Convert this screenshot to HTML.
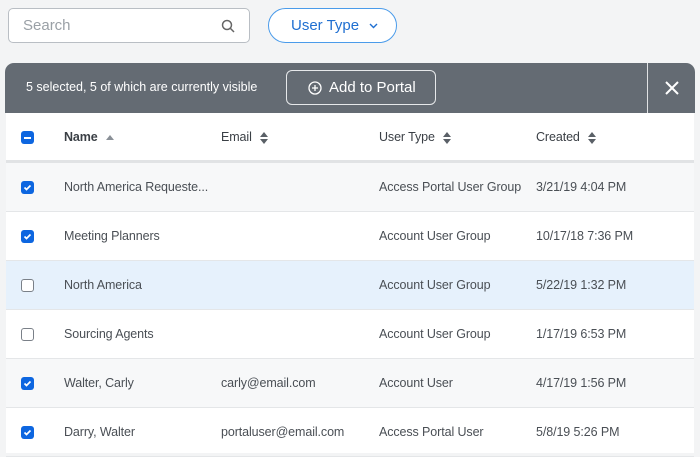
<!DOCTYPE html>
<html><head><style>
*{box-sizing:border-box;margin:0;padding:0}
body{width:700px;height:451px;overflow:hidden;background:#f3f4f5;font-family:"Liberation Sans",sans-serif;position:relative;color:#4a4f55}
.search{position:absolute;left:8px;top:8px;width:242px;height:35px;background:#fff;border:1px solid #b9bec4;border-radius:5px;font-size:15px;color:#9aa0a6;padding:8px 14px}
.ut{position:absolute;left:268px;top:8px;width:129px;height:35px;border:1px solid #4a9bea;border-radius:18px;background:#fff;color:#1f6fd1;font-size:15px;padding:8px 0 0 22px}
.bar{position:absolute;left:5px;top:63px;width:690px;height:50px;background:#646b73;border-radius:9px 9px 0 0;color:#fff}
.bar .t{position:absolute;left:21px;top:17px;font-size:12.5px}
.btn{position:absolute;left:281px;top:7px;width:150px;height:35px;border:1px solid #e6e8ea;border-radius:6px;font-size:15px;padding:8px 0 0 42px}
.btn svg{position:absolute;left:21px;top:10px}
.x{position:absolute;left:642px;top:0;width:1px;height:50px;background:#e0e2e4}
.card{position:absolute;left:6px;top:113px;width:688px;height:340px;background:#fff}
.row{position:absolute;left:0;width:688px;height:49px;border-bottom:1px solid #e4e6e8;font-size:12.5px;letter-spacing:-0.1px}
.row span{position:absolute;top:17px}
.hd{top:0;height:50px;border-bottom:3px solid #e1e3e5;color:#3a3f45}
.cb{position:absolute;left:15px;top:18px;width:13px;height:13px;border-radius:3px;background:#0d66e0}
.cb.off{background:#fff;border:1.5px solid #7a8088}
.sort{display:inline-block;vertical-align:middle;margin-left:5px}
</style></head><body>
<div class="search">Search<svg style="position:absolute;right:14px;top:10px" width="14" height="14" viewBox="0 0 14 14"><circle cx="6" cy="6" r="4.5" fill="none" stroke="#666" stroke-width="1.5"/><path d="M9.5 9.5L13 13" stroke="#666" stroke-width="1.5"/></svg></div>
<div class="ut">User Type <svg style="margin-left:6px;vertical-align:middle" width="9" height="6" viewBox="0 0 9 6"><path d="M1 1l3.5 3.5L8 1" fill="none" stroke="#1f6fd1" stroke-width="1.4"/></svg></div>
<div class="bar"><div class="t">5 selected, 5 of which are currently visible</div>
<div class="btn"><svg width="14" height="14" viewBox="0 0 14 14"><circle cx="7" cy="7" r="6" fill="none" stroke="#fff" stroke-width="1.3"/><path d="M7 4v6M4 7h6" stroke="#fff" stroke-width="1.3"/></svg>Add to Portal</div>
<div class="x"></div>
<svg style="position:absolute;left:660px;top:18px" width="14" height="14" viewBox="0 0 14 14"><path d="M1 1l12 12M13 1L1 13" stroke="#fff" stroke-width="2"/></svg></div>
<div class="card">
<div class="row hd"><div class="cb"><div style="position:absolute;left:3px;top:5.5px;width:7px;height:2px;background:#fff"></div></div>
<span style="left:58px;font-weight:bold">Name <svg class="sort" width="8" height="5"><path d="M0 5L4 0L8 5z" fill="#8a9097"/></svg></span>
<span style="left:215px">Email <svg class="sort" width="8" height="12"><path d="M0 5L4 0L8 5zM0 7L4 12L8 7z" fill="#5a6067"/></svg></span>
<span style="left:373px">User Type <svg class="sort" width="8" height="12"><path d="M0 5L4 0L8 5zM0 7L4 12L8 7z" fill="#5a6067"/></svg></span>
<span style="left:530px">Created <svg class="sort" width="8" height="12"><path d="M0 5L4 0L8 5zM0 7L4 12L8 7z" fill="#5a6067"/></svg></span></div>

<div class="row" style="top:50px;background:#f7f8f9"><div class="cb"><svg width="13" height="13"><path d="M3.5 6.5l2 2 4-4" fill="none" stroke="#fff" stroke-width="1.7"/></svg></div><span style="left:58px">North America Requeste...</span><span style="left:373px">Access Portal User Group</span><span style="left:530px">3/21/19 4:04 PM</span></div>
<div class="row" style="top:99px"><div class="cb"><svg width="13" height="13"><path d="M3.5 6.5l2 2 4-4" fill="none" stroke="#fff" stroke-width="1.7"/></svg></div><span style="left:58px">Meeting Planners</span><span style="left:373px">Account User Group</span><span style="left:530px">10/17/18 7:36 PM</span></div>
<div class="row" style="top:148px;background:#e6f1fc"><div class="cb off"></div><span style="left:58px">North America</span><span style="left:373px">Account User Group</span><span style="left:530px">5/22/19 1:32 PM</span></div>
<div class="row" style="top:197px"><div class="cb off"></div><span style="left:58px">Sourcing Agents</span><span style="left:373px">Account User Group</span><span style="left:530px">1/17/19 6:53 PM</span></div>
<div class="row" style="top:246px;background:#f7f8f9"><div class="cb"><svg width="13" height="13"><path d="M3.5 6.5l2 2 4-4" fill="none" stroke="#fff" stroke-width="1.7"/></svg></div><span style="left:58px">Walter, Carly</span><span style="left:215px">carly@email.com</span><span style="left:373px">Account User</span><span style="left:530px">4/17/19 1:56 PM</span></div>
<div class="row" style="top:295px"><div class="cb"><svg width="13" height="13"><path d="M3.5 6.5l2 2 4-4" fill="none" stroke="#fff" stroke-width="1.7"/></svg></div><span style="left:58px">Darry, Walter</span><span style="left:215px">portaluser@email.com</span><span style="left:373px">Access Portal User</span><span style="left:530px">5/8/19 5:26 PM</span></div>
</div>
</body></html>
